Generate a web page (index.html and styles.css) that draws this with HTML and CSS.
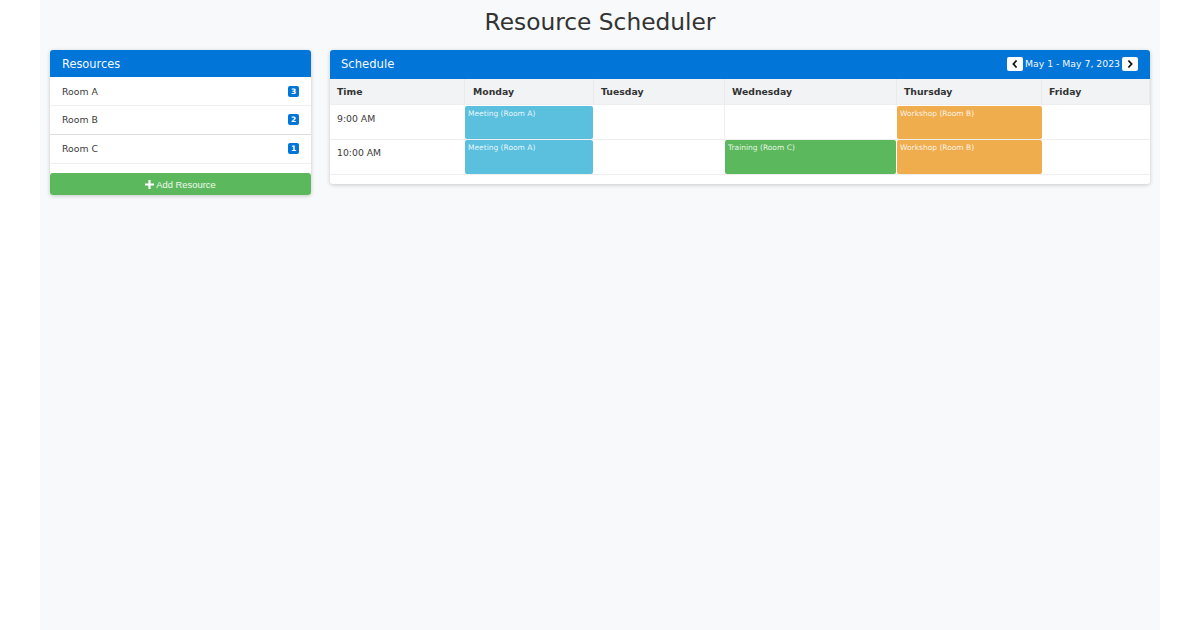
FILE: index.html
```html
<!DOCTYPE html>
<html lang="en">
<head>
<meta charset="utf-8">
<title>Resource Scheduler</title>
<link rel="stylesheet" href="styles.css">
</head>
<body>
<div class="container">
  <h1 class="title">Resource Scheduler</h1>
  <div class="layout">
    <aside class="sidebar">
      <div class="panel">
        <div class="panel-head">Resources</div>
        <ul class="list">
          <li class="item"><span>Room A</span><span class="badge">3</span></li>
          <li class="item"><span>Room B</span><span class="badge">2</span></li>
          <li class="item"><span>Room C</span><span class="badge">1</span></li>
        </ul>
        <button class="add"><svg class="plus" viewBox="0 0 9 9" width="9" height="9"><path d="M3.4 0h2.2v3.4H9v2.2H5.6V9H3.4V5.6H0V3.4h3.4z" fill="#fff"/></svg>Add Resource</button>
      </div>
    </aside>
    <main class="schedule">
      <div class="sched-head">
        <span>Schedule</span>
        <div class="range">
          <button class="nav"><svg viewBox="0 0 8 10" width="8" height="10"><path d="M5.6 1.5 2.4 5l3.2 3.5" fill="none" stroke="#111" stroke-width="1.8"/></svg></button>
          <span class="range-text">May 1 - May 7, 2023</span>
          <button class="nav"><svg viewBox="0 0 8 10" width="8" height="10"><path d="M2.4 1.5 5.6 5 2.4 8.5" fill="none" stroke="#111" stroke-width="1.8"/></svg></button>
        </div>
      </div>
      <div class="grid">
        <div class="th">Time</div>
        <div class="th">Monday</div>
        <div class="th">Tuesday</div>
        <div class="th">Wednesday</div>
        <div class="th">Thursday</div>
        <div class="th">Friday</div>

        <div class="td time">9:00 AM</div>
        <div class="td first"><div class="event info">Meeting (Room A)</div></div>
        <div class="td divider"></div>
        <div class="td"></div>
        <div class="td first flush"><div class="event warn">Workshop (Room B)</div></div>
        <div class="td"></div>

        <div class="td time second">10:00 AM</div>
        <div class="td"><div class="event info">Meeting (Room A)</div></div>
        <div class="td"></div>
        <div class="td"><div class="event ok">Training (Room C)</div></div>
        <div class="td flush"><div class="event warn">Workshop (Room B)</div></div>
        <div class="td"></div>
      </div>
    </main>
  </div>
</div>
</body>
</html>
```
FILE: styles.css
```css
* { box-sizing: border-box; }
html, body { margin: 0; padding: 0; height: 100%; }
body { background: #fff; font-family: "DejaVu Sans", sans-serif; color: #212529; overflow: hidden; }
.container { width: 1120px; height: 630px; margin: 0 auto; background: #f8f9fa; padding: 0 10px; }
.title { margin: 0; padding-top: 7px; height: 50px; font-size: 23.3px; line-height: 29px; font-weight: 400; text-align: center; color: #333; }
.layout { display: flex; align-items: flex-start; gap: 19px; }
.sidebar { width: 261px; flex: none; }
.panel { background: #fff; border-radius: 3px; box-shadow: 0 1px 4px rgba(0,0,0,.2); }
.panel-head { height: 27px; padding: 0 12px; background: #0275d8; color: #f4f8fd; font-size: 11.4px; line-height: 28px; border-radius: 3px 3px 0 0; }
.list { list-style: none; margin: 0; padding: 0 0 9px; }
.item { display: flex; justify-content: space-between; align-items: center; height: 29px; padding: 0 12px; font-size: 9.3px; color: #3a3a3a; border-bottom: 1px solid #f0f0f0; }
.item:nth-child(n+2) { padding-bottom: 1px; }
.item:nth-child(2) { border-bottom-color: #ddd; }
.badge { width: 11px; height: 11px; border-radius: 2px; background: #0275d8; color: #fff; font-size: 7.5px; font-weight: 700; line-height: 11px; text-align: center; }
.add { display: flex; align-items: center; justify-content: center; width: 100%; height: 22px; border: 0; border-radius: 3px; background: #5cb85c; color: #f2f9f2; font-family: "Liberation Sans", sans-serif; font-size: 9.4px; padding: 0; }
.plus { margin-right: 2px; }
.schedule { width: 820px; flex: none; height: 134px; background: #fff; border-radius: 3px; box-shadow: 0 1px 4px rgba(0,0,0,.2); }
.sched-head { display: flex; justify-content: space-between; align-items: center; height: 29px; padding: 0 12px 2px 11px; background: #0275d8; color: #f4f8fd; font-size: 11.6px; border-radius: 3px 3px 0 0; }
.range { display: flex; align-items: center; gap: 2px; }
.range-text { font-size: 9.3px; }
.nav { display: flex; align-items: center; justify-content: center; width: 16px; height: 14px; padding: 0; border: 0; border-radius: 2px; background: #fff; }
.grid { display: grid; grid-template-columns: 135px 129px 131px 172px 145px 108px; grid-template-rows: 26px 35px 35px; }
.th { padding-left: 7px; font-size: 9.3px; font-weight: 700; line-height: 25px; color: #333; background: #f1f3f5; border-bottom: 1px solid #eee; border-right: 1px solid #eaeaea; }
.th:nth-child(2) { padding-left: 8px; }
.td { border-bottom: 1px solid #eee; padding-right: 1px; }
.td.first { padding-top: 1px; }
.td.flush { padding-right: 0; }
.td.divider { border-right: 1px solid #eee; }
.time { padding: 8px 7px; font-size: 9.3px; color: #3a3a3a; }
.time.second { padding-top: 7px; }
.event { height: 100%; padding: 3px; font-size: 7.5px; line-height: 9px; color: rgba(255,255,255,.88); border-radius: 2px; }
.info { background: #5bc0de; }
.ok { background: #5cb85c; }
.warn { background: #f0ad4e; }
```
